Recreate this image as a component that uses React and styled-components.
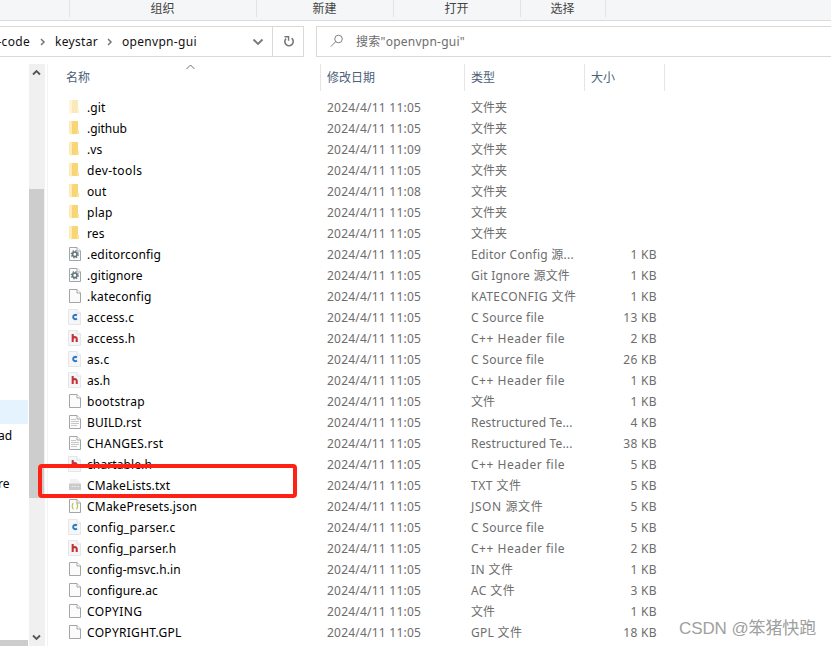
import React from 'react';
import styled, { createGlobalStyle } from 'styled-components';

const GlobalStyle = createGlobalStyle`
  * {
    box-sizing: border-box;
  }

  body {
    margin: 0;
    background: #fff;
    overflow: hidden;
    font-family: 'Noto Sans', 'Noto Sans CJK SC', sans-serif;
    font-size: 12px;
  }
`;

const Window = styled.div`
  position: relative;
  display: flex;
  flex-direction: column;
  width: 831px;
  height: 646px;
  overflow: hidden;
  background: #fff;
`;

const Ribbon = styled.div`
  display: flex;
  flex: none;
  height: 21px;
  background: #f5f6f7;
  border-bottom: 1px solid #dadbdc;
`;

const RibbonGroup = styled.div`
  width: ${({ $width }) => $width}px;
  height: 17px;
  padding-right: 1px;
  border-right: 1px solid #e2e3e4;
  line-height: 17px;
  text-align: center;
  color: #444;
`;

const AddressRow = styled.div`
  display: flex;
  flex: none;
  gap: 12px;
  height: 31px;
  margin-top: 5px;
`;

const AddressBar = styled.div`
  display: flex;
  width: 304px;
  border: 1px solid #d9d9d9;
  border-left: none;
`;

const Crumbs = styled.div`
  display: flex;
  align-items: center;
  flex: 1;
  color: #111;
`;

const Crumb = styled.span`
  display: flex;
  flex: none;
  justify-content: ${({ $clipped }) => ($clipped ? 'flex-end' : 'flex-start')};
  width: ${({ $width }) => $width}px;
  padding-right: ${({ $clipped }) => ($clipped ? 10 : 0)}px;
  line-height: 28px;
  white-space: nowrap;
  letter-spacing: 0.3px;
  overflow: hidden;
`;

const Separator = styled.span`
  display: flex;
  flex: none;
  width: 15px;
`;

const DropArrow = styled.span`
  display: flex;
  margin-left: auto;
  margin-right: 8px;
`;

const RefreshButton = styled.div`
  display: flex;
  align-items: center;
  justify-content: center;
  width: 31px;
  padding-left: 1px;
  border-left: 1px solid #d9d9d9;
`;

const SearchBox = styled.div`
  display: flex;
  align-items: center;
  flex: 1;
  gap: 11px;
  padding: 0 0 1px 13px;
  border: 1px solid #d9d9d9;
  border-right: none;
  color: #6d6d6d;
  letter-spacing: 0.25px;
`;

const Body = styled.div`
  display: flex;
  flex: 1;
  min-height: 0;
  padding-top: 7px;
`;

const NavPane = styled.div`
  display: flex;
  flex-direction: column;
  width: 29px;
  padding-top: 336px;
  overflow: hidden;
`;

const NavHighlight = styled.div`
  flex: none;
  width: 28px;
  height: 24px;
  background: #e5f3ff;
`;

const NavLabel = styled.div`
  flex: none;
  height: 24px;
  margin-bottom: 24px;
  margin-left: -2px;
  line-height: 24px;
  color: #000;
`;

const NavScroll = styled.div`
  flex: none;
  width: 28px;
  height: 6px;
  margin-top: auto;
  background: #cdcdcd;
`;

const Scrollbar = styled.div`
  display: flex;
  flex-direction: column;
  width: 16px;
  background: #f0f0f0;
`;

const ScrollButton = styled.div`
  display: flex;
  align-items: center;
  justify-content: center;
  width: 15px;
  height: 17px;
`;

const ScrollTrack = styled.div`
  flex: 1;
  padding-top: 108px;
`;

const ScrollThumb = styled.div`
  width: 15px;
  height: 309px;
  background: #cdcdcd;
`;

const FilePane = styled.div`
  flex: 1;
  margin-left: 2px;
  border-left: 1px solid #f3f3f3;
`;

const HeaderRow = styled.div`
  display: flex;
  height: 27px;
  margin-bottom: 6px;
  padding-left: 12px;
`;

const HeaderCell = styled.div`
  position: relative;
  width: ${({ $width }) => $width}px;
  padding-left: 6px;
  border-right: 1px solid #e5e5e5;
  line-height: 27px;
  color: #4c607a;
`;

const SortMark = styled.svg`
  position: absolute;
  left: 126px;
  top: 0;
`;

const FileRow = styled.div`
  display: grid;
  grid-template-columns: 19px 240px 144px 120px 66px;
  align-items: center;
  height: 21px;
  padding-left: 20px;
  line-height: 21px;
  white-space: nowrap;
  color: #6d6d6d;
`;

const FileName = styled.span`
  color: #000;
  letter-spacing: ${({ $spacing }) => $spacing}px;
`;

const DateCell = styled.span`
  letter-spacing: 0.22px;
`;

const TypeCell = styled.span`
  letter-spacing: ${({ $spacing }) => $spacing}px;
`;

const SizeCell = styled.span`
  text-align: right;
  letter-spacing: 0.35px;
`;

const Icon = styled.svg`
  display: block;
  align-self: start;
  margin-top: 2px;
`;

// red frame drawn over the CMakeLists.txt row
const Highlight = styled.div`
  position: absolute;
  left: 38px;
  top: 464px;
  width: 259px;
  height: 34px;
  border: 4px solid #ff2113;
  border-radius: 4px;
`;

const Watermark = styled.div`
  position: absolute;
  left: 679px;
  top: 617px;
  font-family: 'Liberation Sans', 'Noto Sans CJK SC', sans-serif;
  font-size: 17px;
  line-height: 24px;
  letter-spacing: -0.1px;
  white-space: nowrap;
  color: #a0a0a0;
`;

const files = [
  ['.git', 'faded', '11:05', '文件夹', ''],
  ['.github', 'folder', '11:05', '文件夹', ''],
  ['.vs', 'folder', '11:09', '文件夹', ''],
  ['dev-tools', 'folder', '11:05', '文件夹', ''],
  ['out', 'folder', '11:08', '文件夹', ''],
  ['plap', 'folder', '11:05', '文件夹', ''],
  ['res', 'folder', '11:05', '文件夹', ''],
  ['.editorconfig', 'gear', '11:05', 'Editor Config 源...', '1 KB'],
  ['.gitignore', 'gear', '11:05', 'Git Ignore 源文件', '1 KB'],
  ['.kateconfig', 'file', '11:05', 'KATECONFIG 文件', '1 KB'],
  ['access.c', 'c', '11:05', 'C Source file', '13 KB'],
  ['access.h', 'h', '11:05', 'C++ Header file', '2 KB'],
  ['as.c', 'c', '11:05', 'C Source file', '26 KB'],
  ['as.h', 'h', '11:05', 'C++ Header file', '1 KB'],
  ['bootstrap', 'file', '11:05', '文件', '1 KB'],
  ['BUILD.rst', 'text', '11:05', 'Restructured Te...', '4 KB'],
  ['CHANGES.rst', 'text', '11:05', 'Restructured Te...', '38 KB'],
  ['chartable.h', 'h', '11:05', 'C++ Header file', '5 KB'],
  ['CMakeLists.txt', 'txt', '11:05', 'TXT 文件', '5 KB'],
  ['CMakePresets.json', 'json', '11:05', 'JSON 源文件', '5 KB'],
  ['config_parser.c', 'c', '11:05', 'C Source file', '5 KB'],
  ['config_parser.h', 'h', '11:05', 'C++ Header file', '2 KB'],
  ['config-msvc.h.in', 'file', '11:05', 'IN 文件', '1 KB'],
  ['configure.ac', 'file', '11:05', 'AC 文件', '3 KB'],
  ['COPYING', 'file', '11:05', '文件', '1 KB'],
  ['COPYRIGHT.GPL', 'file', '11:05', 'GPL 文件', '18 KB'],
];

const nameSpacing = {
  '.github': -0.05,
  'dev-tools': 0.42,
  plap: 0.3,
  '.editorconfig': 0.18,
  '.kateconfig': 0.18,
  'access.c': 0.22,
  'access.h': 0.15,
  'as.c': 0.3,
  'as.h': 0,
  bootstrap: 0.32,
  'CHANGES.rst': 0.25,
  'CMakePresets.json': 0.22,
  'config_parser.c': 0.3,
  'config_parser.h': 0.25,
  COPYING: 0.38,
  'COPYRIGHT.GPL': 0.3,
};

const typeSpacing = {
  'Editor Config 源...': 0.25,
  'Git Ignore 源文件': 0.22,
  'KATECONFIG 文件': 0.45,
  'C Source file': 0.3,
  'C++ Header file': 0.53,
  'Restructured Te...': 0.18,
  'TXT 文件': 0.5,
  'JSON 源文件': 0.6,
  'IN 文件': 0.4,
  'AC 文件': 0.4,
  'GPL 文件': 0.3,
};

const Page = () => (
  <>
    <path d="M1.5 1.5H9L12.5 5V14.5H1.5Z" fill="#fbfbfb" stroke="#a3a5a6" />
    <path d="M9 1.5V5H12.5" fill="#fff" stroke="#a3a5a6" />
  </>
);

const FileIcon = ({ kind }) => {
  switch (kind) {
    case 'faded':
    case 'folder':
      return (
        <Icon width="14" height="16" opacity={kind === 'faded' ? 0.5 : 1}>
          <path d="M2 1H10V10L11 10.8V14H2Z" fill="#f8d675" />
          <path d="M9 10H10L11 10.8V14H9Z" fill="#fbe29a" />
          <path d="M1 1H3L4.5 2.5V15L1 13.5Z" fill="#ffebb6" />
          <path d="M4.5 3V13.5" stroke="#efc75f" strokeWidth="0.6" />
        </Icon>
      );
    case 'c':
    case 'h':
      return (
        <Icon width="14" height="17">
          <path d="M0.5 0.5H9L12.5 4V15.5H0.5Z" fill="#f5f6f8" stroke="#e4e6ea" />
          <path d="M9 0.5V4H12.5" fill="#fff" stroke="#dcdfe4" />
          {kind === 'c' ? (
            <path d="M9 6.3C6.8 5.3 5.2 6.2 5.2 8C5.2 9.9 6.9 10.7 9 9.7" fill="none" stroke="#2d78c6" strokeWidth="2" />
          ) : (
            <path d="M4.7 4V12M4.7 8.6C5.2 6.7 8.7 6.4 8.7 8.8V12" fill="none" stroke="#c4333a" strokeWidth="2.1" />
          )}
        </Icon>
      );
    case 'gear':
      return (
        <Icon width="14" height="16">
          <Page />
          <circle cx="6.8" cy="8.3" r="2.3" fill="none" stroke="#60747e" strokeWidth="1.6" />
          <circle cx="6.8" cy="8.3" r="3.5" fill="none" stroke="#60747e" strokeWidth="1.2" strokeDasharray="1.4 1.35" />
        </Icon>
      );
    case 'text':
      return (
        <Icon width="14" height="16">
          <Page />
          <path d="M3 5.5H8M3 7.5H11M3 9.5H11M3 11.5H9" stroke="#c8c8c8" />
        </Icon>
      );
    case 'txt':
      return (
        <Icon width="14" height="16">
          <path d="M2 2H9L12 5V7H2Z" fill="#f1f1f1" />
          <path d="M1 6.5H13V13H1Z" fill="#cacaca" />
          <path d="M3.5 9.5H11" stroke="#e8e8e8" strokeDasharray="2 0.8" />
        </Icon>
      );
    case 'json':
      return (
        <Icon width="14" height="16">
          <Page />
          <path
            d="M5.5 5C4.2 5 5 7.7 3.8 8C5 8.3 4.2 11 5.5 11M8.3 5C9.6 5 8.8 7.7 10 8C8.8 8.3 9.6 11 8.3 11"
            fill="none"
            stroke="#bdc04b"
            strokeWidth="1.2"
          />
        </Icon>
      );
    default:
      return (
        <Icon width="14" height="16">
          <Page />
        </Icon>
      );
  }
};

const Chevron = ({ d, width, height, stroke = '#555', weight = 1.5 }) => (
  <svg width={width} height={height}>
    <path d={d} fill="none" stroke={stroke} strokeWidth={weight} />
  </svg>
);

const App = () => (
  <>
    <GlobalStyle />
    <Window>
      <Ribbon>
        <RibbonGroup $width={70} />
        <RibbonGroup $width={187}>组织</RibbonGroup>
        <RibbonGroup $width={137}>新建</RibbonGroup>
        <RibbonGroup $width={127}>打开</RibbonGroup>
        <RibbonGroup $width={85}>选择</RibbonGroup>
      </Ribbon>

      <AddressRow>
        <AddressBar>
          <Crumbs>
            <Crumb $width={40} $clipped>-code</Crumb>
            <Separator>
              <Chevron width={6} height={8} d="M1 1L4 4L1 7" stroke="#777" />
            </Separator>
            <Crumb $width={52}>keystar</Crumb>
            <Separator>
              <Chevron width={6} height={8} d="M1 1L4 4L1 7" stroke="#777" />
            </Separator>
            <Crumb $width={80}>openvpn-gui</Crumb>
            <DropArrow>
              <Chevron width={12} height={8} d="M1.5 1.5L6 6L10.5 1.5" stroke="#777" weight={1.8} />
            </DropArrow>
          </Crumbs>
          <RefreshButton>
            <svg width="12" height="13">
              <path d="M3 3.6A4.2 4.2 0 1 0 8.6 3.2" fill="none" stroke="#777" strokeWidth="1.6" />
              <path d="M1.5 1.8H5.6V5.8" fill="none" stroke="#777" strokeWidth="1.4" />
            </svg>
          </RefreshButton>
        </AddressBar>
        <SearchBox>
          <svg width="15" height="14">
            <circle cx="8.5" cy="5" r="3.8" fill="none" stroke="#808080" />
            <path d="M5.7 7.7L0.8 12.6" stroke="#808080" />
          </svg>
          <span>搜索"openvpn-gui"</span>
        </SearchBox>
      </AddressRow>

      <Body>
        <NavPane>
          <NavHighlight />
          <NavLabel>ad</NavLabel>
          <NavLabel>re</NavLabel>
          <NavScroll />
        </NavPane>
        <Scrollbar>
          <ScrollButton>
            <Chevron width={9} height={7} d="M1 5.5L4.5 2L8 5.5" weight={1.8} />
          </ScrollButton>
          <ScrollTrack>
            <ScrollThumb />
          </ScrollTrack>
          <ScrollButton>
            <Chevron width={9} height={7} d="M1 1.5L4.5 5L8 1.5" weight={1.8} />
          </ScrollButton>
        </Scrollbar>
        <FilePane>
          <HeaderRow>
            <HeaderCell $width={261}>
              名称
              <SortMark width="9" height="6">
                <path d="M0.5 5L4.5 1L8.5 5" fill="none" stroke="#707070" />
              </SortMark>
            </HeaderCell>
            <HeaderCell $width={144}>修改日期</HeaderCell>
            <HeaderCell $width={120}>类型</HeaderCell>
            <HeaderCell $width={80}>大小</HeaderCell>
          </HeaderRow>
          {files.map(([name, kind, time, type, size]) => (
            <FileRow key={name}>
              <FileIcon kind={kind} />
              <FileName $spacing={nameSpacing[name] ?? 0.1}>{name}</FileName>
              <DateCell>2024/4/11 {time}</DateCell>
              <TypeCell $spacing={typeSpacing[type] ?? 0}>{type}</TypeCell>
              <SizeCell>{size}</SizeCell>
            </FileRow>
          ))}
          <FileRow>
            <FileIcon kind="file" />
          </FileRow>
        </FilePane>
      </Body>

      <Highlight />
      <Watermark>CSDN @笨猪快跑</Watermark>
    </Window>
  </>
);

export default App;
